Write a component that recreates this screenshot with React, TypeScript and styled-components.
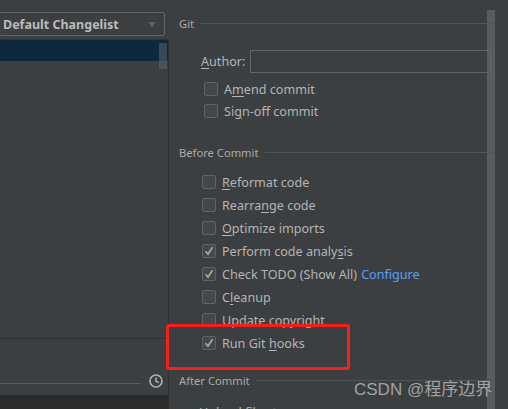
import React from "react";
import styled, { createGlobalStyle } from "styled-components";

const Global = createGlobalStyle`
  html, body { margin: 0; padding: 0; background: #3c3f41; }
  #root { width: 508px; height: 409px; overflow: hidden; }
`;

const Page = styled.div`
  position: relative;
  width: 508px;
  height: 409px;
  display: flex;
  overflow: hidden;
  background: #3c3f41;
  color: #b4b4b4;
  font-family: "Noto Sans", "Open Sans", sans-serif;
  font-size: 12.6px;
`;

const LeftPane = styled.div`
  width: 169px;
  flex: none;
  display: flex;
  flex-direction: column;
`;

const ChangelistBar = styled.div`
  height: 39px;
  flex: none;
  padding-top: 12px;
  box-sizing: border-box;
`;

const Combo = styled.div`
  width: 166px;
  height: 24px;
  margin-left: -1px;
  box-sizing: border-box;
  border: 1px solid #646464;
  border-radius: 2px;
  background: #3c3f41;
  display: flex;
  align-items: center;
  justify-content: space-between;
  padding: 0 8px 0 3px;
  font-weight: 700;
  font-size: 12.5px;
  color: #bbbbbb;
`;

const ComboArrow = styled.span`
  width: 0;
  height: 0;
  border-left: 4.5px solid transparent;
  border-right: 4.5px solid transparent;
  border-top: 5px solid #5f6264;
`;

const ChangeList = styled.div`
  position: relative;
  height: 300px;
  flex: none;
  box-sizing: border-box;
  border-top: 1px solid #323232;
  border-right: 1px solid #323232;
  border-bottom: 1px solid #323232;
`;

const SelectedRow = styled.div`
  height: 21px;
  background: #0d293e;
`;

const ListThumb = styled.div`
  position: absolute;
  top: 3px;
  right: 1px;
  width: 8px;
  height: 26px;
  background: linear-gradient(#344a5b 0 18px, #4f5254 18px);
`;

const MessageArea = styled.div`
  flex: 1;
  display: flex;
  flex-direction: column;
  justify-content: flex-end;
  border-right: 1px solid #323232;
`;

const MessageFooter = styled.div`
  height: 27px;
  display: flex;
  align-items: flex-start;
  gap: 8px;
`;

const MessageRule = styled.div`
  width: 140px;
  height: 1px;
  margin-top: 15px;
  background: #5a5c5e;
`;

const ClockIcon = styled.svg`
  width: 16px;
  height: 16px;
  margin-top: 5px;
  flex: none;
`;

const Editor = styled.div`
  height: 14px;
  flex: none;
  background: #2b2b2b;
`;

const RightPane = styled.div`
  position: relative;
  isolation: isolate;
  flex: 1;
  min-width: 0;
  padding: 0 0 0 10px;
`;

const SectionTitle = styled.div<{ $top: number }>`
  display: flex;
  align-items: center;
  gap: 6px;
  height: 18px;
  margin-top: ${(p) => p.$top}px;
  width: 314px;
  font-size: 11.2px;
  color: #a9a9a9;
`;

const TitleRule = styled.span`
  flex: 1;
  height: 1px;
  background: #515354;
`;

const AuthorRow = styled.div`
  display: flex;
  align-items: center;
  gap: 6px;
  height: 23px;
  margin: 18px 0 8px 22px;
`;

const AuthorLabel = styled.span`
  width: 43px;
  white-space: nowrap;
`;

const AuthorInput = styled.div`
  width: 241px;
  height: 23px;
  box-sizing: border-box;
  border: 1px solid #646464;
`;

const Options = styled.div<{ $gap: number; $left: number; $mt: number }>`
  display: flex;
  flex-direction: column;
  gap: ${(p) => p.$gap}px;
  margin: ${(p) => p.$mt}px 0 0 ${(p) => p.$left}px;
`;

const Option = styled.div`
  display: flex;
  align-items: center;
  gap: 6px;
  height: 16px;
  white-space: nowrap;
`;

const Box = styled.span`
  width: 14px;
  height: 14px;
  flex: none;
  box-sizing: border-box;
  border: 1px solid #606366;
  border-radius: 2px;
  background: #43494a;
  display: flex;
  align-items: center;
  justify-content: center;
`;

const Key = styled.span`
  text-decoration: underline;
  text-underline-offset: 2px;
  text-decoration-thickness: 1px;
`;

const Link = styled.span`
  color: #589df6;
  margin-left: 4px;
`;

const Clipped = styled.div`
  margin: 15px 0 0 20px;
  white-space: nowrap;
`;

const Scrollbar = styled.div`
  position: absolute;
  z-index: -1;
  top: 10px;
  bottom: 0;
  left: 318px;
  width: 8px;
  background: #595b5d;
`;

const Highlight = styled.div`
  position: absolute;
  left: 166px;
  top: 324px;
  width: 184px;
  height: 46px;
  box-sizing: border-box;
  border: 3px solid #f5201a;
  border-radius: 3px;
`;

const Watermark = styled.div`
  position: absolute;
  left: 354px;
  top: 379px;
  font-family: "Liberation Sans", "Noto Sans CJK SC", sans-serif;
  font-size: 17px;
  line-height: 22px;
  color: rgba(190, 190, 190, 0.8);
  white-space: nowrap;
`;

const Check = () => (
  <svg width="10" height="10" viewBox="0 0 10 10" fill="none">
    <path d="M1.5 5.2 L4 8 L8.6 1.2" stroke="#a7a7a7" strokeWidth="1.7" />
  </svg>
);

const Opt = ({ on, children }: { on?: boolean; children: React.ReactNode }) => (
  <Option>
    <Box>{on && <Check />}</Box>
    <span>{children}</span>
  </Option>
);

export default function App() {
  return (
    <Page>
      <Global />
      <LeftPane>
        <ChangelistBar>
          <Combo>
            <span>Default Changelist</span>
            <ComboArrow />
          </Combo>
        </ChangelistBar>
        <ChangeList>
          <SelectedRow />
          <ListThumb />
        </ChangeList>
        <MessageArea>
          <MessageFooter>
            <MessageRule />
            <ClockIcon viewBox="0 0 16 16" fill="none">
              <circle cx="8" cy="8" r="6" stroke="#afb1b3" strokeWidth="1.6" />
              <path d="M8 4.5 V8.3 L10.8 9.6" stroke="#afb1b3" strokeWidth="1.5" />
            </ClockIcon>
          </MessageFooter>
          <Editor />
        </MessageArea>
      </LeftPane>
      <RightPane>
        <SectionTitle $top={14}>
          Git
          <TitleRule />
        </SectionTitle>
        <AuthorRow>
          <AuthorLabel>
            <Key>A</Key>uthor:
          </AuthorLabel>
          <AuthorInput />
        </AuthorRow>
        <Options $gap={6} $left={25} $mt={0}>
          <Opt>
            A<Key>m</Key>end commit
          </Opt>
          <Opt>
            Si<Key>g</Key>n-off commit
          </Opt>
        </Options>
        <SectionTitle $top={24}>
          Before Commit
          <TitleRule />
        </SectionTitle>
        <Options $gap={7} $left={23} $mt={13}>
          <Opt>
            <Key>R</Key>eformat code
          </Opt>
          <Opt>
            Rearra<Key>n</Key>ge code
          </Opt>
          <Opt>
            <Key>O</Key>ptimize imports
          </Opt>
          <Opt on>
            Perform code analy<Key>s</Key>is
          </Opt>
          <Opt on>
            Check TODO (Show All)
            <Link>Configure</Link>
          </Opt>
          <Opt>
            C<Key>l</Key>eanup
          </Opt>
          <Opt>Update copyright</Opt>
          <Opt on>
            Run Git <Key>h</Key>ooks
          </Opt>
        </Options>
        <SectionTitle $top={20}>
          After Commit
          <TitleRule />
        </SectionTitle>
        <Clipped>Upload files to:</Clipped>
        <Scrollbar />
      </RightPane>
      <Highlight />
      <Watermark>CSDN @程序边界</Watermark>
    </Page>
  );
}
